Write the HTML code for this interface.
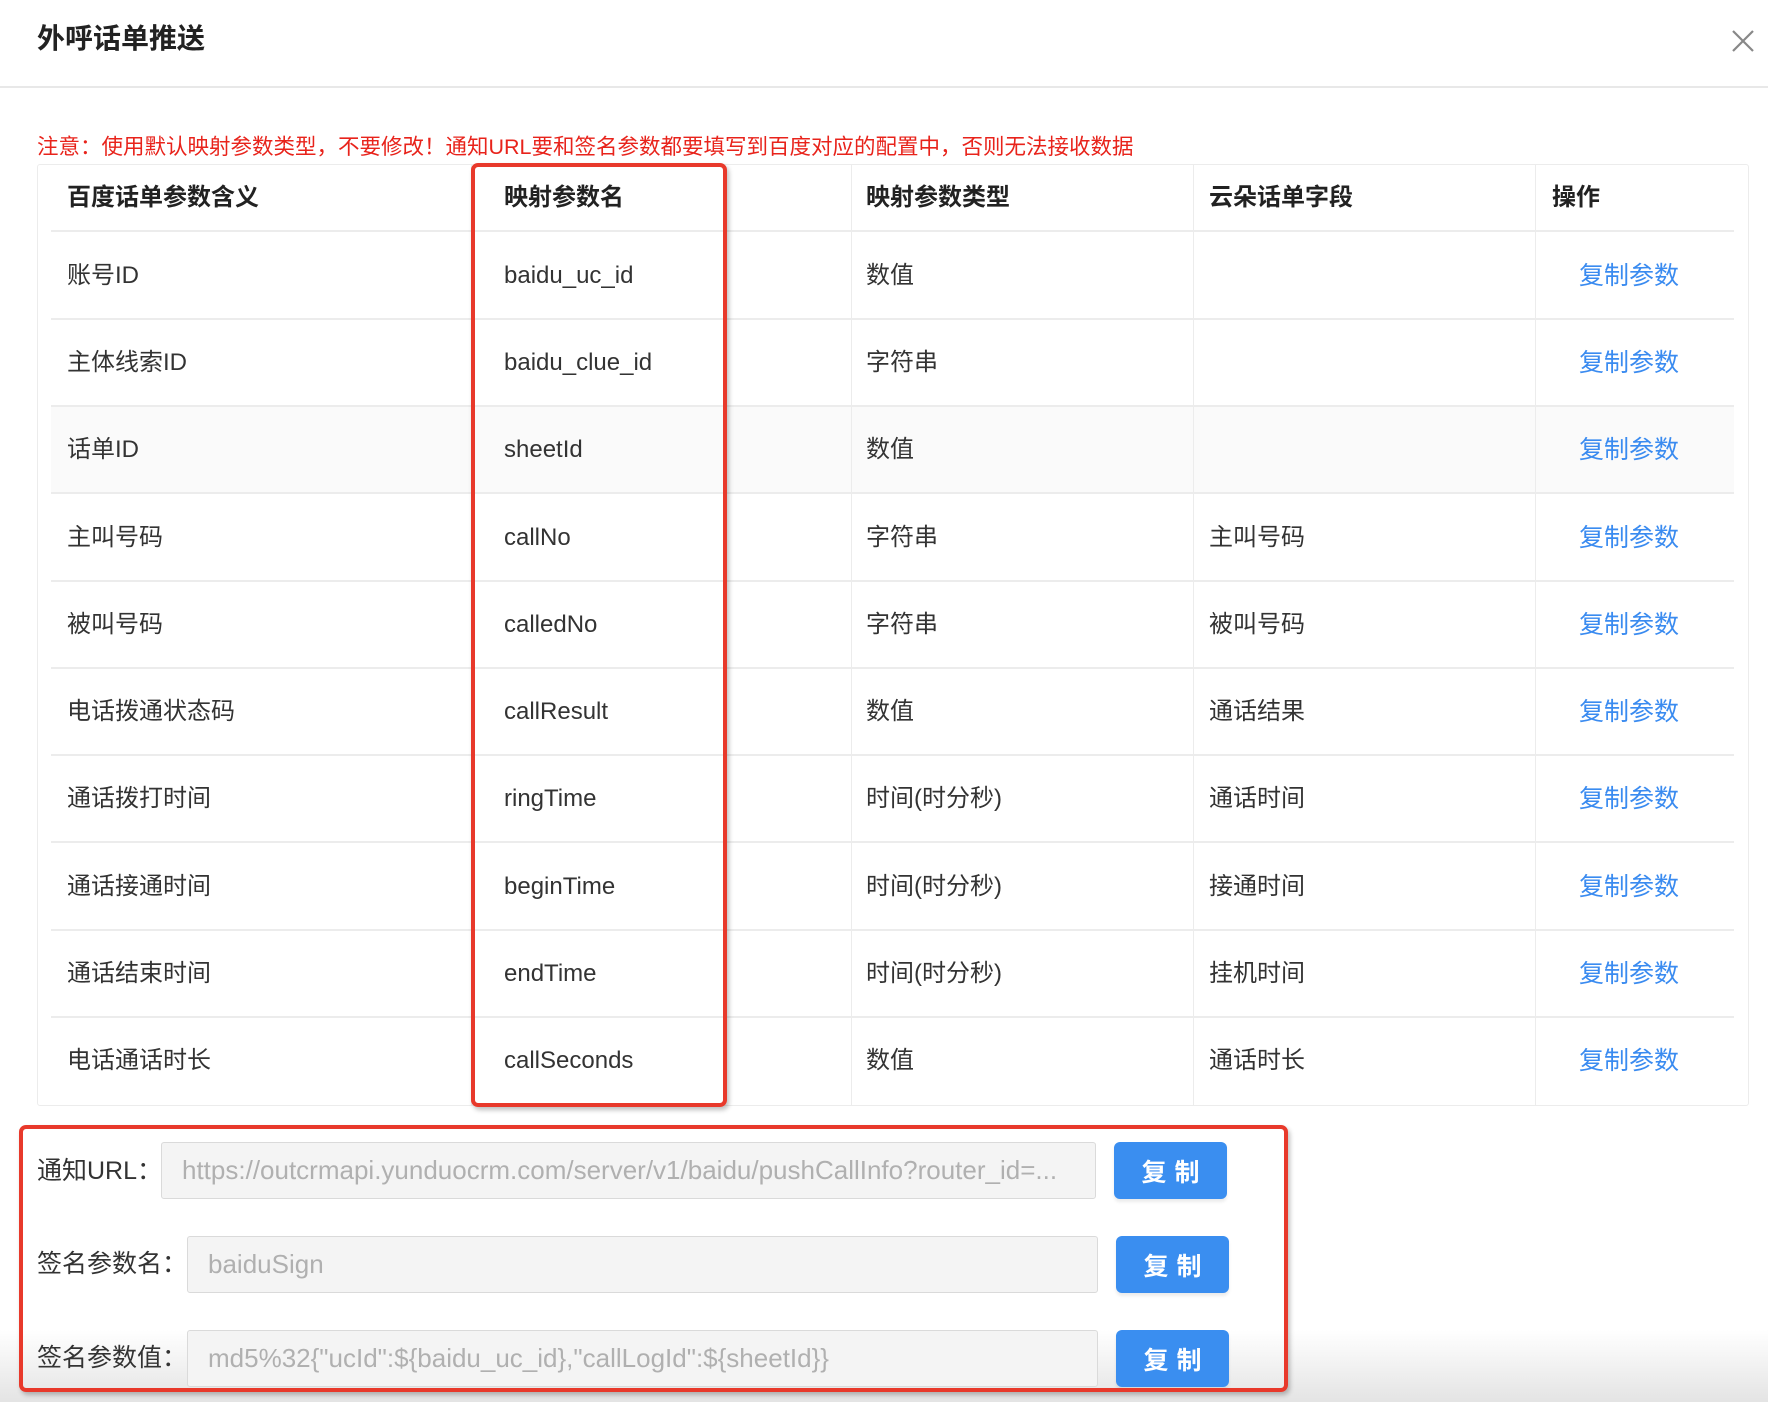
<!DOCTYPE html>
<html><head><meta charset="utf-8">
<style>
*{margin:0;padding:0;box-sizing:border-box}
body{width:1768px;height:1402px;background:#fff;position:relative;overflow:hidden;font-family:"Liberation Sans","Noto Sans CJK SC",sans-serif;color:#333}
.a{position:absolute}
.title{left:37px;top:22px;font-size:28px;font-weight:bold;color:#222;line-height:34px}
.hl{left:0;top:86px;width:1768px;height:2px;background:#e8e8e8}
.warn{left:37px;top:134px;font-size:21.5px;color:#e8231b;line-height:26px;white-space:nowrap}
.tbl{left:37px;top:164px;width:1712px;height:942px;border:1px solid #ececec;border-radius:3px}
.vl{width:1px;background:#ececec;top:165px;height:940px}
.rl{left:51px;width:1683px;height:2px;background:#ececec}
.c{font-size:24px;line-height:30px;color:#333;white-space:nowrap}
.h{font-weight:bold;color:#222}
.lk{color:#3a8bf0;font-size:25px}
.red{border:4px solid #e8392b;border-radius:7px;box-shadow:2px 3px 5px rgba(0,0,0,.25)}
.lbl{font-size:25px;color:#333;line-height:30px}
.inp{background:#f4f4f4;border:1px solid #dadada;border-radius:3px;font-size:26px;color:#b0b0b0;padding-left:20px;display:flex;align-items:center;white-space:nowrap;overflow:hidden}
.btn{background:#3a8ef0;border-radius:6px;color:#fff;font-size:25px;font-weight:bold;display:flex;align-items:center;justify-content:center;letter-spacing:8px;padding-left:8px;box-shadow:0 3px 3px rgba(0,0,0,.08)}
.shade{left:0;top:1330px;width:1768px;height:72px;background:linear-gradient(to bottom,rgba(230,230,230,0),rgba(225,225,225,.9))}
</style></head><body>
<div class="a shade"></div>
<div class="a title">外呼话单推送</div>
<svg class="a" style="left:1731px;top:29px" width="24" height="24" viewBox="0 0 24 24"><path d="M2 2L22 22M22 2L2 22" stroke="#888" stroke-width="2.2" fill="none"/></svg>
<div class="a hl"></div>
<div class="a warn">注意：使用默认映射参数类型，不要修改！通知URL要和签名参数都要填写到百度对应的配置中，否则无法接收数据</div>
<div class="a tbl"></div>
<div class="a" style="left:51px;top:406px;width:1683px;height:87px;background:#fafafa"></div>
<div class="a vl" style="left:471px"></div>
<div class="a vl" style="left:851px"></div>
<div class="a vl" style="left:1193px"></div>
<div class="a vl" style="left:1535px"></div>
<div class="a rl" style="top:230px"></div>
<div class="a rl" style="top:318px"></div>
<div class="a rl" style="top:405px"></div>
<div class="a rl" style="top:492px"></div>
<div class="a rl" style="top:580px"></div>
<div class="a rl" style="top:667px"></div>
<div class="a rl" style="top:754px"></div>
<div class="a rl" style="top:841px"></div>
<div class="a rl" style="top:929px"></div>
<div class="a rl" style="top:1016px"></div>

<div class="a c h" style="left:67px;top:183px">百度话单参数含义</div>
<div class="a c h" style="left:504px;top:183px">映射参数名</div>
<div class="a c h" style="left:866px;top:183px">映射参数类型</div>
<div class="a c h" style="left:1209px;top:183px">云朵话单字段</div>
<div class="a c h" style="left:1552px;top:183px">操作</div>

<div class="a c" style="left:67px;top:261px">账号ID</div><div class="a c" style="left:504px;top:261px">baidu_uc_id</div><div class="a c" style="left:866px;top:261px">数值</div><div class="a c lk" style="left:1579px;top:261px">复制参数</div>
<div class="a c" style="left:67px;top:348px">主体线索ID</div><div class="a c" style="left:504px;top:348px">baidu_clue_id</div><div class="a c" style="left:866px;top:348px">字符串</div><div class="a c lk" style="left:1579px;top:348px">复制参数</div>
<div class="a c" style="left:67px;top:435px">话单ID</div><div class="a c" style="left:504px;top:435px">sheetId</div><div class="a c" style="left:866px;top:435px">数值</div><div class="a c lk" style="left:1579px;top:435px">复制参数</div>
<div class="a c" style="left:67px;top:523px">主叫号码</div><div class="a c" style="left:504px;top:523px">callNo</div><div class="a c" style="left:866px;top:523px">字符串</div><div class="a c" style="left:1209px;top:523px">主叫号码</div><div class="a c lk" style="left:1579px;top:523px">复制参数</div>
<div class="a c" style="left:67px;top:610px">被叫号码</div><div class="a c" style="left:504px;top:610px">calledNo</div><div class="a c" style="left:866px;top:610px">字符串</div><div class="a c" style="left:1209px;top:610px">被叫号码</div><div class="a c lk" style="left:1579px;top:610px">复制参数</div>
<div class="a c" style="left:67px;top:697px">电话拨通状态码</div><div class="a c" style="left:504px;top:697px">callResult</div><div class="a c" style="left:866px;top:697px">数值</div><div class="a c" style="left:1209px;top:697px">通话结果</div><div class="a c lk" style="left:1579px;top:697px">复制参数</div>
<div class="a c" style="left:67px;top:784px">通话拨打时间</div><div class="a c" style="left:504px;top:784px">ringTime</div><div class="a c" style="left:866px;top:784px">时间(时分秒)</div><div class="a c" style="left:1209px;top:784px">通话时间</div><div class="a c lk" style="left:1579px;top:784px">复制参数</div>
<div class="a c" style="left:67px;top:872px">通话接通时间</div><div class="a c" style="left:504px;top:872px">beginTime</div><div class="a c" style="left:866px;top:872px">时间(时分秒)</div><div class="a c" style="left:1209px;top:872px">接通时间</div><div class="a c lk" style="left:1579px;top:872px">复制参数</div>
<div class="a c" style="left:67px;top:959px">通话结束时间</div><div class="a c" style="left:504px;top:959px">endTime</div><div class="a c" style="left:866px;top:959px">时间(时分秒)</div><div class="a c" style="left:1209px;top:959px">挂机时间</div><div class="a c lk" style="left:1579px;top:959px">复制参数</div>
<div class="a c" style="left:67px;top:1046px">电话通话时长</div><div class="a c" style="left:504px;top:1046px">callSeconds</div><div class="a c" style="left:866px;top:1046px">数值</div><div class="a c" style="left:1209px;top:1046px">通话时长</div><div class="a c lk" style="left:1579px;top:1046px">复制参数</div>

<div class="a red" style="left:471px;top:163px;width:256px;height:944px"></div>

<div class="a lbl" style="left:37px;top:1156px">通知URL：</div>
<div class="a inp" style="left:161px;top:1142px;width:935px;height:57px">https://outcrmapi.yunduocrm.com/server/v1/baidu/pushCallInfo?router_id=...</div>
<div class="a btn" style="left:1114px;top:1142px;width:113px;height:57px">复制</div>
<div class="a lbl" style="left:37px;top:1249px">签名参数名：</div>
<div class="a inp" style="left:187px;top:1236px;width:911px;height:57px">baiduSign</div>
<div class="a btn" style="left:1116px;top:1236px;width:113px;height:57px">复制</div>
<div class="a lbl" style="left:37px;top:1343px">签名参数值：</div>
<div class="a inp" style="left:187px;top:1330px;width:911px;height:57px">md5%32{"ucId":${baidu_uc_id},"callLogId":${sheetId}}</div>
<div class="a btn" style="left:1116px;top:1330px;width:113px;height:57px">复制</div>
<div class="a red" style="left:19px;top:1125px;width:1269px;height:267px"></div>
</body></html>
